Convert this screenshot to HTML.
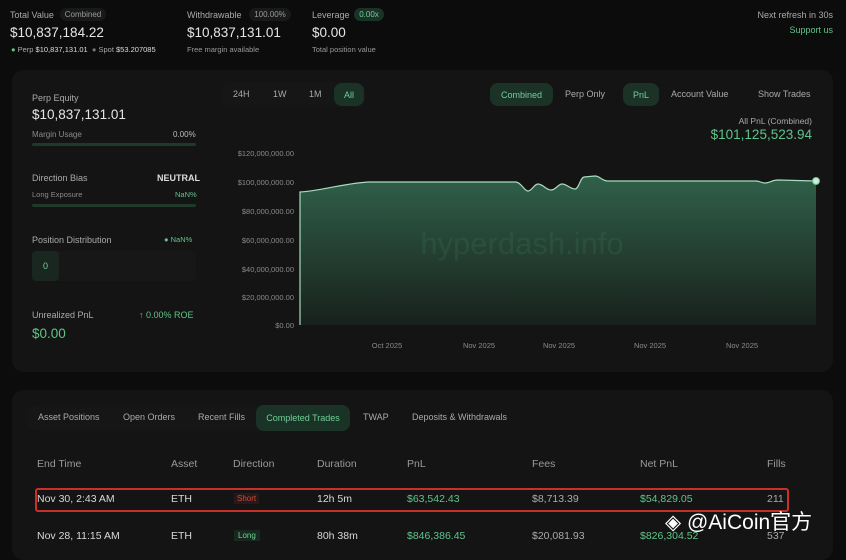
<!DOCTYPE html>
<html><head><meta charset="utf-8"><style>
*{margin:0;padding:0;box-sizing:border-box}
body{width:846px;height:545px;background:#0c0c0c;font-family:"Liberation Sans",sans-serif;color:#d8d8d8;position:relative;overflow:hidden;font-size:9px}
.a{position:absolute;white-space:nowrap}
.g{color:#5fc48a}
.m{color:#8a8a8a}
.pill{position:absolute;border-radius:8px;background:#171a18;color:#9a9a9a;font-size:9px;display:flex;align-items:center;justify-content:center}
.on{background:#1b3327;color:#6fcf97}
.panel{position:absolute;background:#141414;border-radius:12px}
.bar{position:absolute;height:3px;background:#1f3a2b;border-radius:2px}
.th{position:absolute;top:458px;font-size:10.5px;color:#9a9a9a}
.r1{position:absolute;top:493px;font-size:10.5px}
.r2{position:absolute;top:530px;font-size:10.5px}
</style></head><body>
<div class="a m" style="left:10px;top:10px;font-size:9px;color:#aaa">Total Value</div>
<div class="pill" style="left:60px;top:8px;width:46px;height:13px;font-size:8px">Combined</div>
<div class="a" style="left:10px;top:25px;font-size:13.5px;color:#e6e6e6">$10,837,184.22</div>
<div class="a" style="left:11px;top:45px;font-size:7.5px;color:#aaa"><span class="g">●</span> Perp <span style="color:#ddd">$10,837,131.01</span> &nbsp;<span style="color:#777">●</span> Spot <span style="color:#ddd">$53.207085</span></div>
<div class="a" style="left:187px;top:10px;color:#aaa">Withdrawable</div>
<div class="pill" style="left:249px;top:8px;width:42px;height:13px;font-size:8px">100.00%</div>
<div class="a" style="left:187px;top:25px;font-size:13.5px;color:#e6e6e6">$10,837,131.01</div>
<div class="a" style="left:187px;top:45px;font-size:7.5px;color:#999">Free margin available</div>
<div class="a" style="left:312px;top:10px;color:#aaa">Leverage</div>
<div class="pill on" style="left:354px;top:8px;width:30px;height:13px;font-size:8px">0.00x</div>
<div class="a" style="left:312px;top:25px;font-size:13.5px;color:#e6e6e6">$0.00</div>
<div class="a" style="left:312px;top:45px;font-size:7.5px;color:#999">Total position value</div>
<div class="a" style="right:13px;top:10px;color:#aaa">Next refresh in 30s</div>
<div class="a g" style="right:13px;top:25px">Support us</div>

<div class="panel" style="left:12px;top:70px;width:821px;height:302px"></div>
<div class="a" style="left:32px;top:93px;color:#aaa;font-size:9px">Perp Equity</div>
<div class="a" style="left:32px;top:107px;font-size:13.5px;color:#e6e6e6">$10,837,131.01</div>
<div class="a m" style="left:32px;top:130px;font-size:8px">Margin Usage</div>
<div class="a" style="left:173px;top:130px;font-size:8px;color:#bbb">0.00%</div>
<div class="bar" style="left:32px;top:143px;width:164px"></div>
<div class="a" style="left:32px;top:173px;color:#aaa">Direction Bias</div>
<div class="a" style="left:157px;top:173px;font-weight:bold;color:#ddd">NEUTRAL</div>
<div class="a m" style="left:32px;top:190px;font-size:7.5px">Long Exposure</div>
<div class="a g" style="left:175px;top:190px;font-size:7.5px">NaN%</div>
<div class="bar" style="left:32px;top:204px;width:164px"></div>
<div class="a" style="left:32px;top:235px;color:#aaa">Position Distribution</div>
<div class="a g" style="left:164px;top:235px;font-size:7.5px">● NaN%</div>
<div style="position:absolute;left:32px;top:251px;width:164px;height:30px;background:#171717;border-radius:4px"></div>
<div style="position:absolute;left:32px;top:251px;width:27px;height:30px;background:#1a2620;border-radius:4px;color:#6fcf97;font-size:9px;display:flex;align-items:center;justify-content:center">0</div>
<div class="a" style="left:32px;top:310px;color:#aaa">Unrealized PnL</div>
<div class="a g" style="left:139px;top:310px">↑ 0.00% ROE</div>
<div class="a g" style="left:32px;top:326px;font-size:13.5px">$0.00</div>

<div style="position:absolute;left:222px;top:82px;width:144px;height:25px;background:#161616;border-radius:10px"></div>
<div class="a" style="left:233px;top:89px;color:#aaa">24H</div>
<div class="a" style="left:273px;top:89px;color:#aaa">1W</div>
<div class="a" style="left:309px;top:89px;color:#aaa">1M</div>
<div class="pill on" style="left:334px;top:83px;width:30px;height:23px">All</div>
<div class="pill on" style="left:490px;top:83px;width:63px;height:23px">Combined</div>
<div class="a" style="left:565px;top:89px;color:#aaa">Perp Only</div>
<div class="pill on" style="left:623px;top:83px;width:36px;height:23px">PnL</div>
<div class="a" style="left:671px;top:89px;color:#aaa">Account Value</div>
<div class="a" style="left:758px;top:89px;color:#aaa">Show Trades</div>
<div class="a" style="right:34px;top:116px;color:#aaa;font-size:8.5px">All PnL (Combined)</div>
<div class="a g" style="right:34px;top:127px;font-size:13.5px">$101,125,523.94</div>

<svg class="a" style="left:0;top:0" width="846" height="380">
<defs><linearGradient id="gr" x1="0" y1="0" x2="0" y2="1"><stop offset="0" stop-color="#30604a"/><stop offset="1" stop-color="#18211c"/></linearGradient></defs>
<g font-family="Liberation Sans" font-size="7.5" fill="#8a8a8a" text-anchor="end">
<text x="294" y="156">$120,000,000.00</text><text x="294" y="185">$100,000,000.00</text><text x="294" y="214">$80,000,000.00</text><text x="294" y="243">$60,000,000.00</text><text x="294" y="272">$40,000,000.00</text><text x="294" y="300">$20,000,000.00</text><text x="294" y="328">$0.00</text></g>
<path d="M300,325 L300,192 C320,191 340,184 368,182 L516,182 C522,183 524,191 528,191 C532,191 534,184 538,184 C543,184 546,190 551,190 C556,190 558,184 562,184 C567,184 570,189 575,189 C579,189 580,178 584,177 L595,176 C600,176 602,181 608,181 L756,181 C760,181 761,183 765,183 C770,183 772,180 778,180 L816,181 L816,325 Z" fill="url(#gr)"/>
<path d="M300,325 L300,192 C320,191 340,184 368,182 L516,182 C522,183 524,191 528,191 C532,191 534,184 538,184 C543,184 546,190 551,190 C556,190 558,184 562,184 C567,184 570,189 575,189 C579,189 580,178 584,177 L595,176 C600,176 602,181 608,181 L756,181 C760,181 761,183 765,183 C770,183 772,180 778,180 L816,181" fill="none" stroke="#a8dcc0" stroke-width="1.2"/>
<circle cx="816" cy="181" r="3.5" fill="#cfe9da" stroke="#5fc48a"/>
<text x="522" y="254" font-family="Liberation Sans" font-size="31" fill="#3a6b52" opacity="0.3" text-anchor="middle">hyperdash.info</text>
<g font-family="Liberation Sans" font-size="7.5" fill="#8a8a8a" text-anchor="middle">
<text x="387" y="348">Oct 2025</text><text x="479" y="348">Nov 2025</text><text x="559" y="348">Nov 2025</text><text x="650" y="348">Nov 2025</text><text x="742" y="348">Nov 2025</text></g>
</svg>

<div class="panel" style="left:12px;top:390px;width:821px;height:170px"></div>
<div style="position:absolute;left:28px;top:405px;width:300px;height:26px;background:#161616;border-radius:8px"></div>
<div class="a" style="left:38px;top:412px;color:#aaa;font-size:9px">Asset Positions</div>
<div class="a" style="left:123px;top:412px;color:#aaa">Open Orders</div>
<div class="a" style="left:198px;top:412px;color:#aaa">Recent Fills</div>
<div class="pill on" style="left:256px;top:405px;width:94px;height:26px">Completed Trades</div>
<div class="a" style="left:363px;top:412px;color:#aaa">TWAP</div>
<div class="a" style="left:412px;top:412px;color:#aaa">Deposits &amp; Withdrawals</div>
<div class="th" style="left:37px">End Time</div><div class="th" style="left:171px">Asset</div><div class="th" style="left:233px">Direction</div><div class="th" style="left:317px">Duration</div><div class="th" style="left:407px">PnL</div><div class="th" style="left:532px">Fees</div><div class="th" style="left:640px">Net PnL</div><div class="th" style="left:767px">Fills</div>
<div style="position:absolute;left:35px;top:488px;width:754px;height:24px;border:2px solid #c8312a;border-radius:3px"></div>
<div class="r1" style="left:37px">Nov 30, 2:43 AM</div><div class="r1" style="left:171px">ETH</div>
<div class="r1" style="left:234px;top:493px;font-size:8px;color:#d04a3c;background:#2a1717;padding:1px 3px">Short</div>
<div class="r1" style="left:317px">12h 5m</div><div class="r1 g" style="left:407px">$63,542.43</div><div class="r1" style="left:532px;color:#aaa">$8,713.39</div><div class="r1 g" style="left:640px">$54,829.05</div><div class="r1" style="left:767px;color:#aaa">211</div>
<div class="r2" style="left:37px">Nov 28, 11:15 AM</div><div class="r2" style="left:171px">ETH</div>
<div class="r2" style="left:234px;top:530px;font-size:8px;color:#6fcf97;background:#17291f;padding:1px 4px">Long</div>
<div class="r2" style="left:317px">80h 38m</div><div class="r2 g" style="left:407px">$846,386.45</div><div class="r2" style="left:532px;color:#aaa">$20,081.93</div><div class="r2 g" style="left:640px">$826,304.52</div><div class="r2" style="left:767px;color:#aaa">537</div>
<div class="a" style="left:665px;top:506px;font-size:21px;color:#fff;font-family:'Liberation Sans','Noto Sans CJK SC',sans-serif">◈ @AiCoin官方</div>
</body></html>
